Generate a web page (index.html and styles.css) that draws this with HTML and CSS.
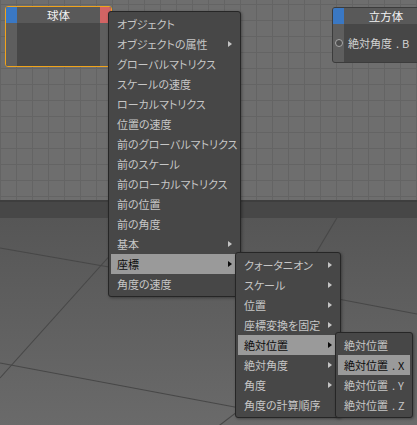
FILE: index.html
```html
<!DOCTYPE html>
<html lang="ja">
<head>
<meta charset="utf-8">
<link rel="stylesheet" href="styles.css">
</head>
<body>
<div class="screen">
  <div class="editor">
    <div class="node node-sphere selected">
      <div class="node-head">
        <span class="tab tab-blue"></span>
        <span class="node-title">球体</span>
        <span class="tab tab-red"></span>
      </div>
      <div class="node-body">
        <div class="side"></div>
        <div class="main"></div>
        <div class="side"></div>
      </div>
    </div>
    <div class="node node-cube">
      <div class="node-head">
        <span class="tab tab-blue"></span>
        <span class="node-title">立方体</span>
        <span class="tab tab-grey"></span>
      </div>
      <div class="node-body">
        <div class="side"><span class="port"></span></div>
        <div class="main"><div class="port-label">絶対角度<span class="dot">.</span>B</div></div>
        <div class="side"></div>
      </div>
    </div>
  </div>
  <div class="divider"></div>
  <div class="viewport">
    <svg class="floor" viewBox="0 218 417 207" width="417" height="207">
      <g stroke="#474747" stroke-width="1.1" fill="none">
        <line x1="0" y1="248" x2="241" y2="290"/>
        <line x1="0" y1="378" x2="140" y2="222"/>
        <line x1="0" y1="363" x2="240" y2="408"/>
        <line x1="216" y1="428" x2="250" y2="402"/>
        <line x1="338" y1="216" x2="300" y2="280"/>
        <line x1="338" y1="299" x2="417" y2="314"/>
      </g>
    </svg>
  </div>

  <div class="menu menu-main">
    <div class="item">オブジェクト</div>
    <div class="item sub">オブジェクトの属性<i class="arrow"></i></div>
    <div class="item">グローバルマトリクス</div>
    <div class="item">スケールの速度</div>
    <div class="item">ローカルマトリクス</div>
    <div class="item">位置の速度</div>
    <div class="item">前のグローバルマトリクス</div>
    <div class="item">前のスケール</div>
    <div class="item">前のローカルマトリクス</div>
    <div class="item">前の位置</div>
    <div class="item">前の角度</div>
    <div class="item sub">基本<i class="arrow"></i></div>
    <div class="item sub active">座標<i class="arrow"></i></div>
    <div class="item">角度の速度</div>
  </div>

  <div class="menu menu-coords">
    <div class="item sub">クォータニオン<i class="arrow"></i></div>
    <div class="item sub">スケール<i class="arrow"></i></div>
    <div class="item sub">位置<i class="arrow"></i></div>
    <div class="item sub">座標変換を固定<i class="arrow"></i></div>
    <div class="item sub active">絶対位置<i class="arrow"></i></div>
    <div class="item sub">絶対角度<i class="arrow"></i></div>
    <div class="item sub">角度<i class="arrow"></i></div>
    <div class="item">角度の計算順序</div>
  </div>

  <div class="menu menu-abs">
    <div class="item">絶対位置</div>
    <div class="item active">絶対位置<span class="dot">.</span>X</div>
    <div class="item">絶対位置<span class="dot">.</span>Y</div>
    <div class="item">絶対位置<span class="dot">.</span>Z</div>
  </div>
</div>
</body>
</html>
```

FILE: styles.css
```css
html, body {
  margin: 0;
  padding: 0;
}

body {
  width: 417px;
  height: 425px;
  overflow: hidden;
  background: #5c5c5c;
  font-family: "Noto Sans CJK JP", "Noto Sans", sans-serif;
  font-size: 11px;
  font-feature-settings: "palt";
}

.screen {
  position: relative;
  width: 417px;
  height: 425px;
  display: flex;
  flex-direction: column;
  overflow: hidden;
}

/* ---------- node editor ---------- */
.editor {
  position: relative;
  height: 200px;
  flex: none;
  background-color: #6e6e6e;
  background-image:
    linear-gradient(to right, #646464 1px, transparent 1px),
    linear-gradient(to bottom, #646464 1px, transparent 1px);
  background-size: 16px 16px;
  background-position: 0 4px;
}

.node {
  position: absolute;
  box-sizing: border-box;
  display: flex;
  flex-direction: column;
  border: 1px solid #3c3c3c;
  border-radius: 3px;
  overflow: hidden;
  background: #474747;
}

.node.selected {
  border-color: #f0a41c;
}

.node-sphere {
  left: 5px;
  top: 6px;
  width: 107px;
  height: 61px;
}

.node-cube {
  left: 332px;
  top: 7px;
  width: 108px;
  height: 56px;
}

.node-head {
  display: flex;
  height: 16px;
  flex: none;
  background: #595959;
}

.tab {
  width: 11px;
  flex: none;
}

.tab-blue { background: #3a78c4; }
.tab-red { background: #d26464; }
.tab-grey { background: #5e5e5e; }

.node-title {
  flex: 1;
  text-align: center;
  color: #f2f2f2;
  line-height: 16px;
  font-size: 11.5px;
}

.node-body {
  flex: 1;
  display: flex;
}

.side {
  width: 11px;
  flex: none;
  background: #5e5e5e;
  display: flex;
  flex-direction: column;
  align-items: center;
}

.main {
  flex: 1;
  background: #474747;
}

.port {
  width: 8px;
  height: 8px;
  margin-top: 15px;
  border: 1px solid #a8a8a8;
  border-radius: 50%;
  box-sizing: border-box;
  background: #4c4c4c;
}

.port-label {
  color: #d2d2d2;
  padding-left: 4px;
  margin-top: 9px;
  line-height: 20px;
  white-space: nowrap;
}

.dot {
  margin: 0 3px 0 4px;
}

/* ---------- divider + viewport ---------- */
.divider {
  height: 16px;
  flex: none;
  border-top: 2px solid #3e3e3e;
  background: #474747;
}

.viewport {
  flex: 1;
  background: linear-gradient(to bottom, #565656, #6a6a6a);
}

.floor {
  display: block;
}

/* ---------- context menus ---------- */
.menu {
  position: absolute;
  box-sizing: border-box;
  padding: 2px 0;
  background: #474747;
  border: 1px solid #262626;
  border-radius: 3px;
  box-shadow: 1px 1px 3px rgba(0, 0, 0, 0.35);
}

.menu-main {
  left: 108px;
  top: 11px;
  width: 133px;
  z-index: 1;
}

.menu-coords {
  left: 235px;
  top: 252px;
  width: 106px;
  z-index: 2;
}

.menu-abs {
  left: 335px;
  top: 332px;
  width: 78px;
  z-index: 3;
}

.item {
  height: 20px;
  line-height: 20px;
  margin: 0 2px;
  padding: 0 6px;
  color: #c6c6c6;
  white-space: nowrap;
  display: flex;
  align-items: center;
}

.item.sub {
  justify-content: space-between;
}

.item.active {
  background: #9a9a9a;
  color: #0c0c0c;
}

.arrow {
  display: block;
  width: 0;
  height: 0;
  border-style: solid;
  border-width: 3.5px 0 3.5px 4px;
  border-color: transparent transparent transparent #c4c4c4;
}

.item.active .arrow {
  border-left-color: #0c0c0c;
}
```
